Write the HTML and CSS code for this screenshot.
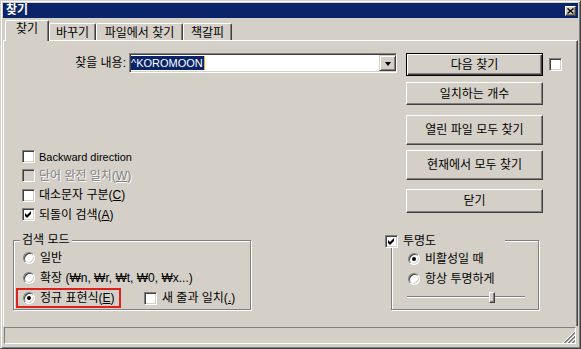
FILE: index.html
```html
<!DOCTYPE html>
<html>
<head>
    <meta charset="utf-8">
    <title>찾기</title>
    <link rel="stylesheet" href="styles.css">
</head>
<body>
<div class="win">
    <div class="titlebar">
        <span class="title">찾기</span>
        <span class="close"><svg width="7" height="6" viewBox="0 0 7 6"><path d="M0.5 0.5L6.5 5.5M6.5 0.5L0.5 5.5" stroke="#000" stroke-width="1.4"/></svg></span>
    </div>
    <div class="tabs">
        <span class="tab on" style="width:44px">찾기</span>
        <span class="tab" style="width:47px">바꾸기</span>
        <span class="tab" style="width:87px">파일에서 찾기</span>
        <span class="tab" style="width:49px">책갈피</span>
    </div>
    <div class="panel">
        <div class="top">
            <div class="left">
                <div class="find-row">
                    <label class="find-label">찾을 내용:</label>
                    <div class="combo">
                        <span class="sel">^KOROMOON</span><span class="caret"></span>
                        <span class="drop"><i></i></span>
                    </div>
                </div>
                <div class="opts">
                    <div class="row"><span class="chk"></span><span class="en">Backward direction</span></div>
                    <div class="row dis"><span class="chk"></span><span>단어 완전 일치(<u>W</u>)</span></div>
                    <div class="row"><span class="chk"></span><span>대소문자 구분(<u>C</u>)</span></div>
                    <div class="row"><span class="chk"><svg width="7" height="7" viewBox="0 0 7 7"><path d="M0 2L2 4L6 0L6 3L2 7L0 5Z" fill="#000"/></svg></span><span>되돌이 검색(<u>A</u>)</span></div>
                </div>
            </div>
            <div class="btns">
                <div class="btn def b1">다음 찾기</div>
                <div class="btn b2">일치하는 개수</div>
                <div class="btn b3">열린 파일 모두 찾기</div>
                <div class="btn b4">현재에서 모두 찾기</div>
                <div class="btn b5">닫기</div>
            </div>
            <span class="chk side"></span>
        </div>
        <div class="bottom">
            <div class="group mode">
                <span class="legend">검색 모드</span>
                <div class="rrow first"><span class="radio"></span><span>일반</span></div>
                <div class="rrow"><span class="radio"></span><span>확장 (₩n, ₩r, ₩t, ₩0, ₩x...)</span></div>
                <div class="rrow last">
                    <span class="mark"><span class="radio on"><i></i></span><span>정규 표현식(<u>E</u>)</span></span>
                    <span class="nl"><span class="chk"></span><span>새 줄과 일치(<u>.</u>)</span></span>
                </div>
            </div>
            <div class="group trans">
                <div class="tlegend"><span class="chk"><svg width="7" height="7" viewBox="0 0 7 7"><path d="M0 2L2 4L6 0L6 3L2 7L0 5Z" fill="#000"/></svg></span><span>투명도</span></div>
                <div class="rrow first"><span class="radio on"><i></i></span><span>비활성일 때</span></div>
                <div class="rrow"><span class="radio"></span><span>항상 투명하게</span></div>
                <div class="slider"><span class="thumb"></span></div>
            </div>
        </div>
    </div>
    <div class="status">
        <svg class="grip" width="12" height="12" viewBox="0 0 12 12" shape-rendering="crispEdges">
            <path d="M0 12L12 0M4 12L12 4M8 12L12 8" stroke="#fff"/>
            <path d="M1 12L12 1M2 12L12 2M5 12L12 5M6 12L12 6M9 12L12 9M10 12L12 10" stroke="#808080"/>
        </svg>
    </div>
</div>
</body>
</html>
```

FILE: styles.css
```css
body { margin: 0; font-family: "Liberation Sans", "Noto Sans CJK KR", sans-serif; font-size: 12px; line-height: 14px; color: #000; }
.win { width: 581px; height: 349px; box-sizing: border-box; padding: 2px; background: #d4d0c8; border: 1px solid; border-color: #d4d0c8 #404040 #404040 #d4d0c8; box-shadow: inset 1px 1px #fff, inset -1px -1px #808080; display: flex; flex-direction: column; }

/* title */
.titlebar { height: 15px; flex: none; background: #0a246a; display: flex; align-items: flex-start; }
.title { color: #fff; font-weight: bold; padding-left: 3px; line-height: 15px; }
.close { margin: 3px 2px 0 auto; width: 11px; height: 10px; box-sizing: border-box; background: #d4d0c8; border: 1px solid; border-color: #fff #404040 #404040 #fff; box-shadow: inset -1px -1px #808080; display: flex; align-items: center; justify-content: center; }

/* tabs */
.tabs { height: 22px; flex: none; display: flex; align-items: flex-end; padding-left: 2px; position: relative; z-index: 1; }
.tab { height: 17px; box-sizing: border-box; text-align: center; padding-top: 2px; background: #d4d0c8; border: 1px solid #fff; border-bottom: 0; border-right-color: #404040; box-shadow: inset -1px 0 #808080; border-radius: 2px 2px 0 0; }
.tab.on { height: 21px; margin-bottom: -1px; padding-top: 1px; }

.panel { height: 286px; flex: none; box-sizing: border-box; border-top: 1px solid #fff; border-left: 1px solid #fff; border-right: 1px solid #404040; box-shadow: inset -1px 0 #808080; }
.top { display: flex; align-items: flex-start; height: 199px; box-sizing: border-box; padding-top: 12px; }
.left { width: 393px; }
.find-row { display: flex; height: 20px; }
.find-label { width: 122px; text-align: right; line-height: 20px; }
.combo { margin-left: 3px; width: 268px; height: 20px; box-sizing: border-box; background: #fff; border: 1px solid; border-color: #808080 #fff #fff #808080; box-shadow: inset 1px 1px #404040, inset -1px -1px #d4d0c8; display: flex; align-items: center; padding-left: 1px; }
.sel { background: #0a246a; color: #fff; font-size: 11px; line-height: 14px; padding: 0 1px 0 0; }
.caret { width: 1px; height: 14px; background: #e8b040; }
.drop { margin-left: auto; width: 17px; height: 16px; box-sizing: border-box; background: #d4d0c8; border: 1px solid; border-color: #d4d0c8 #404040 #404040 #d4d0c8; box-shadow: inset 1px 1px #fff, inset -1px -1px #808080; display: flex; align-items: center; justify-content: center; }
.drop i { width: 0; height: 0; border-left: 3.5px solid transparent; border-right: 3.5px solid transparent; border-top: 4px solid #000; margin-top: 1px; }

.opts { margin-top: 74px; }
.row { display: flex; align-items: center; gap: 4px; height: 19.33px; margin-left: 18px; }
.en { font-size: 11px; }
.dis { color: #808080; text-shadow: 1px 1px #fff; }
.dis .chk { background: #d4d0c8; }

.chk { width: 13px; height: 13px; flex: none; box-sizing: border-box; background: #fff; border: 1px solid; border-color: #808080 #fff #fff #808080; box-shadow: inset 1px 1px #404040, inset -1px -1px #d4d0c8; display: flex; align-items: center; justify-content: center; }
.radio { width: 12px; height: 12px; flex: none; box-sizing: border-box; background: #fff; border-radius: 50%; border: 1px solid; border-color: #808080 #fff #fff #808080; box-shadow: inset 1px 1px #404040, inset -1px -1px #d4d0c8; display: flex; align-items: center; justify-content: center; }
.radio i { width: 4px; height: 4px; border-radius: 50%; background: #000; }

.btns { margin-left: 9px; display: flex; flex-direction: column; }
.btn { width: 137px; box-sizing: border-box; background: #d4d0c8; border: 1px solid; border-color: #fff #404040 #404040 #fff; box-shadow: inset -1px -1px #808080; display: flex; align-items: center; justify-content: center; }
.btn.def { border-color: #000; box-shadow: inset 1px 1px #fff, inset -1px -1px #404040, inset -2px -2px #808080; }
.b1 { height: 23px; }
.b2 { height: 23px; margin-top: 6px; }
.b3 { height: 30px; margin-top: 10px; }
.b4 { height: 30px; margin-top: 5px; }
.b5 { height: 24px; margin-top: 9px; }
.side { margin: 5px 0 0 6px; }

/* groups */
.bottom { display: flex; align-items: flex-start; }
.group { box-sizing: border-box; height: 70px; border: 1px solid #808080; box-shadow: inset 1px 1px #fff, 1px 1px #fff; }
.mode { margin-left: 9px; width: 238px; }
.legend { display: table; margin: -8px 0 0 6px; padding: 0 2px; background: #d4d0c8; line-height: 14px; }
.rrow { display: flex; align-items: center; gap: 5px; height: 20px; margin-left: 9px; }
.rrow.first { margin-top: 1px; }
.rrow.last { margin-left: 2px; gap: 0; }
.mark { display: flex; align-items: center; gap: 5px; width: 105px; height: 20px; box-sizing: border-box; border: 2px solid #e0201c; padding-left: 5px; }
.nl { display: flex; align-items: center; gap: 5px; margin-left: 23px; }

.trans { margin-left: 140px; width: 148px; }
.tlegend { display: flex; align-items: center; gap: 5px; width: 120px; height: 14px; margin: -7px 0 0 -7px; background: #d4d0c8; }
.trans .rrow { margin-left: 16px; }
.trans .rrow.first { margin-top: 1px; }
.slider { display: flex; width: 118px; height: 11px; margin: 3px 0 0 15px; background: linear-gradient(to bottom, transparent 4px, #808080 4px, #808080 5px, #fff 5px, #fff 6px, transparent 6px); }
.thumb { width: 6px; height: 11px; margin-left: 82px; box-sizing: border-box; background: #d4d0c8; border: 1px solid; border-color: #fff #404040 #404040 #fff; box-shadow: inset -1px -1px #808080; }

.status { margin: 1px 0 0 1px; width: 572px; height: 17px; flex: none; box-sizing: border-box; border: 1px solid; border-color: #808080 #fff #fff #808080; display: flex; justify-content: flex-end; align-items: flex-end; }
.grip { display: block; }
```
